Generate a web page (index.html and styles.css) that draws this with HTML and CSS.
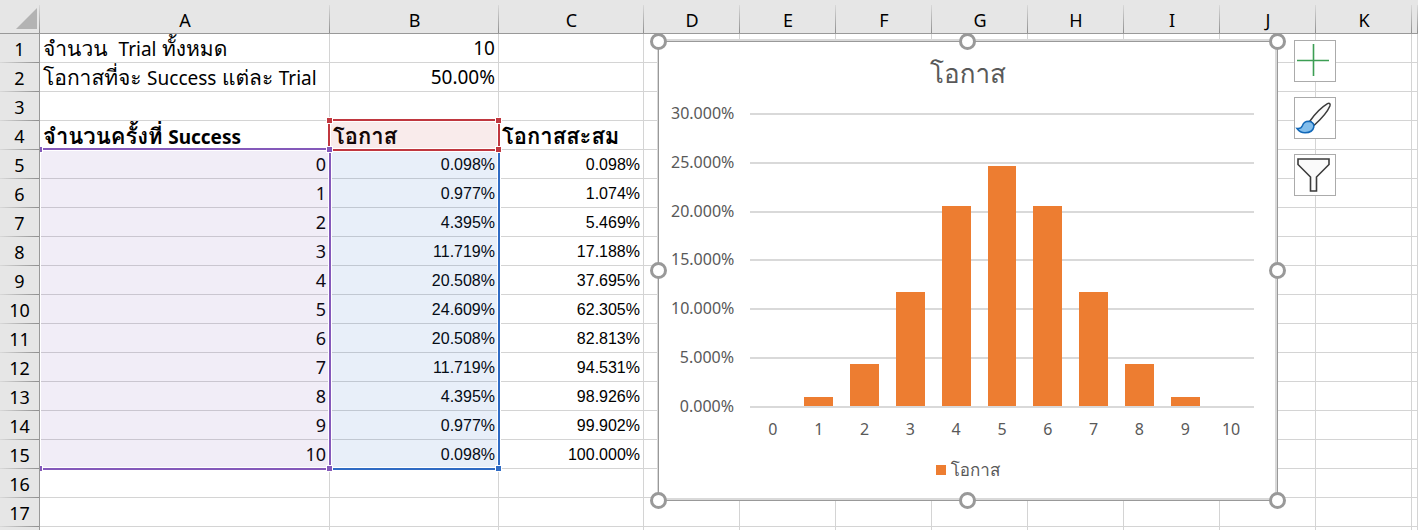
FILE: index.html
```html
<!DOCTYPE html>
<html lang="th">
<head>
  <meta charset="UTF-8">
  <title>Binomial</title>
  <meta name="viewport" content="width=device-width, initial-scale=1.0">
  <link rel="stylesheet" href="styles.css">
</head>
<body>
  <main class="sheet">
    <table class="grid">
      <colgroup>
        <col class="col-num"><col class="col-a"><col class="col-b"><col class="col-c">
        <col class="col"><col class="col"><col class="col"><col class="col">
        <col class="col"><col class="col"><col class="col"><col class="col"><col>
      </colgroup>
      <thead>
        <tr>
          <th class="corner"><svg width="21" height="21" viewBox="0 0 21 21"><path d="M21 0V21H0Z" fill="#b3b3b3"/></svg></th>
          <th>A</th><th>B</th><th>C</th><th>D</th><th>E</th><th>F</th>
          <th>G</th><th>H</th><th>I</th><th>J</th><th>K</th><th></th>
        </tr>
      </thead>
      <tbody id="rows"></tbody>
    </table>

    <figure class="chart">
      <figcaption class="chart-title">โอกาส</figcaption>
      <div class="plot-row">
        <div class="y-axis">
          <span>30.000%</span><span>25.000%</span><span>20.000%</span><span>15.000%</span>
          <span>10.000%</span><span>5.000%</span><span>0.000%</span>
        </div>
        <div class="plot">
          <div class="lines"><i></i><i></i><i></i><i></i><i></i><i></i><i></i></div>
          <div class="bars" id="bars"></div>
        </div>
      </div>
      <div class="x-axis" id="xAxis"></div>
      <div class="legend"><span class="swatch"></span>โอกาส</div>
      <span class="grip top left"></span><span class="grip top mid"></span><span class="grip top right"></span>
      <span class="grip center left"></span><span class="grip center right"></span>
      <span class="grip bottom left"></span><span class="grip bottom mid"></span><span class="grip bottom right"></span>
    </figure>

    <div class="chart-tools">
      <button type="button" aria-label="Chart Elements">
        <svg width="40" height="40" viewBox="0 0 40 40"><path d="M18.5 3V35M2 19.5H34" stroke="#3c9e54" stroke-width="1.6"/></svg>
      </button>
      <button type="button" aria-label="Chart Styles">
        <svg width="40" height="40" viewBox="0 0 40 40">
          <path d="M15 23C20 16 27 9 32.500 5.700C34.500 4.700 35.600 5.700 34.900 8C32 15 25 22 19.500 27Z" fill="#fafafa" stroke="#3b3b3b" stroke-width="1.5"/>
          <path d="M2 30.500C5 31 6.500 30 7.500 27.500C8.500 24.500 11 23.300 13.500 23.300C17 23.500 19.300 26 18.800 29C18 33 14 34.700 10 34.700C7 34.700 4 33.300 2 30.500Z" fill="#83beec" stroke="#1268b8" stroke-width="1.5"/>
        </svg>
      </button>
      <button type="button" aria-label="Chart Filters">
        <svg width="40" height="40" viewBox="0 0 40 40"><path d="M3 4H34V9.500L21.500 22V36H15.500V22L3 9.500Z" fill="#fafafa" stroke="#3b3b3b" stroke-width="1.6"/></svg>
      </button>
    </div>
  </main>

  <script>
    const chance = [0.098, 0.977, 4.395, 11.719, 20.508, 24.609, 20.508, 11.719, 4.395, 0.977, 0.098];
    const total = [0.098, 1.074, 5.469, 17.188, 37.695, 62.305, 82.813, 94.531, 98.926, 99.902, 100];
    const plotHeight = 293;
    const pct = n => n.toFixed(3) + "%";
    const range = (name, corners) =>
      `<span class="range ${name}">${corners.map(c => `<b class="${c}"></b>`).join("")}</span>`;

    const cells = {
      1: ['<td class="text">จำนวน&nbsp; <span class="latin">Trial</span> ทั้งหมด</td>', '<td class="input">10</td>'],
      2: ['<td class="text">โอกาสที่จะ <span class="latin">Success</span> แต่ละ <span class="latin">Trial</span></td>', '<td class="input">50.00%</td>'],
      4: ['<td class="text bold">จำนวนครั้งที่ <span class="latin">Success</span></td>',
          `<td class="text bold">${range("range-name", ["tl", "tr", "br"])}โอกาส</td>`,
          '<td class="text bold">โอกาสสะสม</td>']
    };
    chance.forEach((value, i) => {
      const first = i === 0;
      cells[i + 5] = [
        `<td>${first ? range("range-category", ["tl", "tr", "bl", "br"]) : ""}${i}</td>`,
        `<td class="small">${first ? range("range-value", ["br"]) : ""}${pct(value)}</td>`,
        `<td class="small">${pct(total[i])}</td>`
      ];
    });

    let html = "";
    for (let r = 1; r <= 18; r++) {
      const row = cells[r] || [];
      // the last row only peeks in under the fold
      html += `<tr><th>${r < 18 ? r : ""}</th>${row.join("")}${"<td></td>".repeat(12 - row.length)}</tr>`;
    }
    document.getElementById("rows").innerHTML = html;

    // bars in whole pixels, scaled to the 30% axis
    document.getElementById("bars").innerHTML =
      chance.map(v => `<span><i style="height:${Math.floor(v / 30 * plotHeight)}px"></i></span>`).join("");
    document.getElementById("xAxis").innerHTML = chance.map((v, i) => `<span>${i}</span>`).join("");
  </script>
</body>
</html>
```

FILE: styles.css
```css
:root {
  --head: #e6e6e6;
  --line: #d4d4d4;
  --edge: #999999;
  --bar: #ed7d31;
  --purple: #8459ba;
  --red: #c0373f;
  --blue: #2f6bc4;
  --muted: #595959;
}

* {
  box-sizing: border-box;
}

body {
  margin: 0;
  background: #fff;
  color: #000;
  font-family: "Noto Sans", "Leelawadee UI", Tahoma, Waree, Loma, Garuda, sans-serif;
  font-size: 18px;
}

.sheet {
  position: relative;
  height: 100vh;
  overflow: hidden;
}

.grid {
  width: 100%;
  table-layout: fixed;
  border-collapse: separate;
  border-spacing: 0;
}

.col-num { width: 40px; }
.col-a { width: 290px; }
.col-b { width: 169px; }
.col-c { width: 145px; }
.col { width: 96px; }

th, td {
  height: 29px;
  padding: 0 3px;
  line-height: 26px;
  white-space: nowrap;
}

th {
  font-weight: 400;
  background: var(--head);
}

thead th {
  height: 34px;
  padding-top: 6px;
  border-bottom: 1px solid var(--edge);
  background: linear-gradient(#d9d9d9, #8f8f8f) right bottom / 1px 28px no-repeat var(--head);
}

thead .corner {
  padding: 3px 3px 0 0;
  text-align: right;
}

.corner svg {
  display: block;
  margin-left: auto;
}

tbody th {
  border-right: 1px solid var(--edge);
  background: linear-gradient(90deg, #d9d9d9, #8f8f8f) left bottom / 100% 1px no-repeat var(--head);
}

td {
  position: relative;
  text-align: right;
  border-right: 1px solid var(--line);
  border-bottom: 1px solid var(--line);
}

.text {
  font-size: 21px;
  line-height: 22px;
  text-align: left;
}

.latin {
  font-size: 19px;
  line-height: 18px;
}

.input {
  font-size: 19px;
}

.bold {
  font-size: 22px;
  font-weight: 700;
}

.small {
  padding-top: 2px;
  font-family: "Liberation Sans", Arial, sans-serif;
  font-size: 16px;
}

/* coloured ranges behind the chart data */
.range {
  position: absolute;
  z-index: 1;
  box-shadow: 0 0 0 1px #fff, inset 0 0 0 1px #fff;
}

.range-name {
  inset: -2px;
  border: 2px solid var(--red);
  background: rgba(192, 55, 63, 0.1);
  z-index: 2;
}

.range-category {
  top: -2px;
  left: 0;
  right: -2px;
  height: 322px;
  border: 2px solid var(--purple);
  border-left: 0;
  background: rgba(132, 89, 186, 0.11);
  clip-path: inset(-5px -5px -5px 0);
  z-index: 3;
}

.range-value {
  top: 0;
  left: 0;
  right: -2px;
  height: 320px;
  border: 2px solid var(--blue);
  border-top: 0;
  border-left: 0;
  background: rgba(47, 107, 196, 0.11);
}

.range b {
  position: absolute;
  width: 7px;
  height: 7px;
  border: 1px solid #fff;
}

.range-name b { background: var(--red); }
.range-category b { background: var(--purple); }
.range-value b { background: var(--blue); }

.tl, .tr { top: -4px; }
.bl, .br { bottom: -4px; }
.tl, .bl { left: -4px; }
.tr, .br { right: -4px; }

/* chart */
.chart {
  position: absolute;
  top: 41px;
  left: 658px;
  width: 620px;
  margin: 0;
  padding: 11px 0 20px;
  border: 1px solid var(--edge);
  background: #fff;
  box-shadow: 0 -2px #d9d9d9, -1px 0 #d9d9d9, inset -2px -2px #d9d9d9;
  color: var(--muted);
  font-size: 16px;
  z-index: 4;
}

.chart-title {
  height: 40px;
  font-size: 26px;
  line-height: 40px;
  text-align: center;
}

.plot-row {
  display: flex;
  gap: 16px;
  margin-top: 10px;
  padding: 0 23px 0 12px;
}

.y-axis {
  display: flex;
  flex-direction: column;
  justify-content: space-between;
  width: 63px;
  height: 313px;
  line-height: 20px;
  text-align: right;
}

.plot {
  display: grid;
  flex: 1;
  height: 295px;
  margin-top: 10px;
}

.lines, .bars {
  grid-area: 1 / 1;
  display: flex;
}

.lines {
  flex-direction: column;
  justify-content: space-between;
}

.lines i {
  height: 2px;
  background: #d9d9d9;
}

.bars {
  height: 293px;
}

.bars span {
  display: flex;
  flex: 1;
  align-items: flex-end;
  justify-content: center;
}

.bars i {
  width: 63%;
  background: var(--bar);
}

.x-axis {
  display: flex;
  margin-top: 3px;
  padding: 0 23px 0 91px;
  line-height: 20px;
  text-align: center;
}

.x-axis span {
  flex: 1;
}

.legend {
  display: flex;
  align-items: center;
  justify-content: center;
  gap: 5px;
  height: 20px;
  margin-top: 21px;
  font-size: 17px;
  line-height: 20px;
}

.swatch {
  width: 10px;
  height: 10px;
  background: var(--bar);
}

.grip {
  position: absolute;
  width: 17px;
  height: 17px;
  border: 3px solid var(--edge);
  border-radius: 50%;
  background: #fff;
}

.grip.top { top: -9px; }
.grip.center { top: calc(50% - 9px); }
.grip.bottom { bottom: -9px; }
.grip.left { left: -9px; }
.grip.mid { left: calc(50% - 9px); }
.grip.right { right: -9px; }

.chart-tools {
  position: absolute;
  top: 40px;
  left: 1294px;
  display: flex;
  flex-direction: column;
  gap: 15px;
}

.chart-tools button {
  width: 42px;
  height: 42px;
  padding: 0;
  border: 1px solid #ababab;
  background: #fff;
  cursor: pointer;
}

.chart-tools svg {
  display: block;
  fill: none;
}
```
